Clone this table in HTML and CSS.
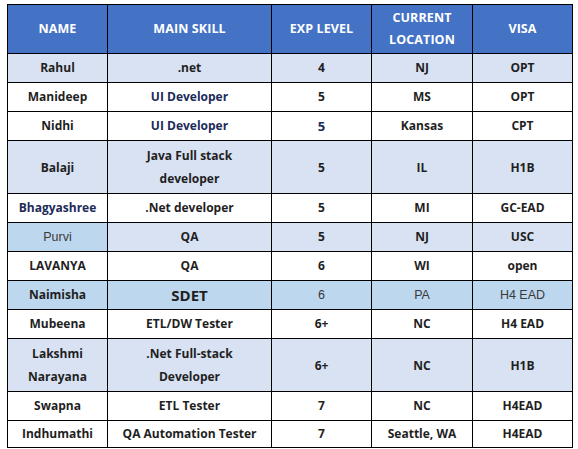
FILE: index.html
```html
<!DOCTYPE html>
<html>
<head>
<meta charset="utf-8">
<link rel="stylesheet" href="styles.css">
</head>
<body>
<div class="wrap">
<table class="grid">
  <colgroup>
    <col class="c1"><col class="c2"><col class="c3"><col class="c4"><col class="c5">
  </colgroup>
  <thead>
    <tr class="head">
      <th>NAME</th><th>MAIN SKILL</th><th>EXP LEVEL</th><th>CURRENT<br>LOCATION</th><th>VISA</th>
    </tr>
  </thead>
  <tbody>
    <tr class="light"><td>Rahul</td><td class="sk">.net</td><td>4</td><td>NJ</td><td>OPT</td></tr>
    <tr><td>Manideep</td><td class="sk navy">UI Developer</td><td>5</td><td>MS</td><td>OPT</td></tr>
    <tr><td>Nidhi</td><td class="sk navy">UI Developer</td><td class="navy big">5</td><td>Kansas</td><td>CPT</td></tr>
    <tr class="light tall"><td>Balaji</td><td class="sk">Java Full stack<br>developer</td><td>5</td><td>IL</td><td>H1B</td></tr>
    <tr><td class="navy sk">Bhagyashree</td><td class="sk">.Net developer</td><td>5</td><td>MI</td><td>GC-EAD</td></tr>
    <tr class="light"><td class="dark plain">Purvi</td><td class="sk">QA</td><td>5</td><td>NJ</td><td>USC</td></tr>
    <tr><td>LAVANYA</td><td class="sk">QA</td><td>6</td><td>WI</td><td>open</td></tr>
    <tr class="dark"><td>Naimisha</td><td class="sk sdet">SDET</td><td class="plain">6</td><td class="plain">PA</td><td class="plain">H4 EAD</td></tr>
    <tr><td>Mubeena</td><td class="sk">ETL/DW Tester</td><td>6+</td><td>NC</td><td>H4 EAD</td></tr>
    <tr class="light tall"><td>Lakshmi<br>Narayana</td><td class="sk">.Net Full-stack<br>Developer</td><td>6+</td><td>NC</td><td>H1B</td></tr>
    <tr><td>Swapna</td><td class="sk">ETL Tester</td><td>7</td><td>NC</td><td>H4EAD</td></tr>
    <tr class="last"><td>Indhumathi</td><td class="sk">QA Automation Tester</td><td>7</td><td>Seattle, WA</td><td>H4EAD</td></tr>
  </tbody>
</table>
</div>
</body>
</html>
```

FILE: styles.css
```css
html, body {
  margin: 0;
  padding: 0;
  background: #ffffff;
}

.wrap {
  padding: 4px 0 0 7px;
}

.grid {
  border-collapse: collapse;
  font-family: "Open Sans", "Liberation Sans", sans-serif;
  font-size: 12px;
  color: #1f1f1f;
  table-layout: fixed;
  width: 565px;
}

.c1 { width: 100px; }
.c2 { width: 164px; }
.c3 { width: 100px; }
.c4 { width: 101px; }
.c5 { width: 100px; }

.grid th,
.grid td {
  border: 1px solid #000000;
  text-align: center;
  vertical-align: middle;
  padding: 0 2px;
  height: 28px;
  line-height: 20px;
  font-weight: 700;
}

.head th {
  background: #4472c4;
  color: #ffffff;
  font-size: 12.5px;
  font-weight: 700;
  height: 48px;
  line-height: 22px;
  letter-spacing: 0.1px;
}

.light td { background: #d9e2f3; }
.dark td, td.dark { background: #bdd7ee; }

.tall td { height: 52px; line-height: 23px; }
.last td { height: 26px; }

.sk { font-weight: 700; }
.navy { color: #1c2b58; }
.big { font-size: 13px; }

.grid td.plain {
  font-family: "Liberation Sans", Arial, sans-serif;
  font-weight: 400;
  font-size: 12.5px;
  color: #3a3a3a;
}

.grid td.sdet {
  font-size: 15px;
  font-weight: 700;
}
```
